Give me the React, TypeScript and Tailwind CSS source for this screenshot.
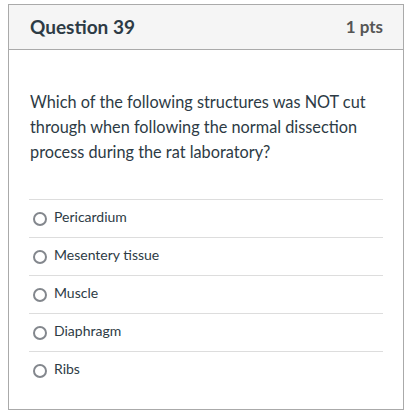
import React from "react";

const answers = ["Pericardium", "Mesentery tissue", "Muscle", "Diaphragm", "Ribs"];

export default function App() {
  return (
    <div className="w-[416px] h-[420px] bg-white pt-[4px] pl-[8px]" style={{ fontFamily: "Lato, 'Liberation Sans', sans-serif" }}>
      <div className="w-[396px] h-[406px] border border-[#aaaaaa] flex flex-col">
        <div className="h-[45px] bg-[#f5f5f5] border-b border-[#aaaaaa] flex items-center justify-between pl-[21px] pr-[20px]">
          <span className="text-[19px] font-bold text-[#2d3b45]">Question 39</span>
          <span className="text-[17px] font-bold text-[#555555]">1 pts</span>
        </div>
        <div className="pt-[39px] px-[20px]">
          <p className="text-[16.3px] leading-[25px] text-[#2d3b45] pl-[1px]">
            Which of the following structures was NOT cut through when following the normal dissection process during the rat laboratory?
          </p>
          <div className="mt-[35px]">
            {answers.map((a) => (
              <div key={a} className="h-[38px] border-t border-[#dddddd] flex items-center pl-[4px]">
                <span className="w-[14px] h-[14px] rounded-full border-2 border-[#83878d] bg-white mr-[7px]" />
                <span className="text-[14px] text-[#2d3b45] mb-[4px]">{a}</span>
              </div>
            ))}
          </div>
        </div>
      </div>
    </div>
  );
}
